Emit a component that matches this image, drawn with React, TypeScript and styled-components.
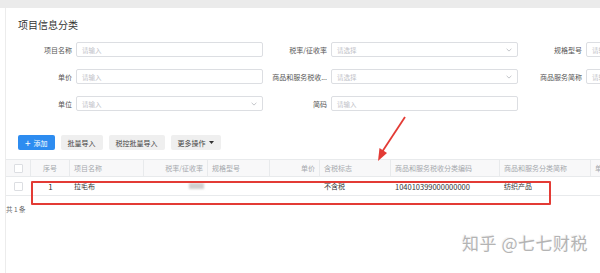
import React from 'react';
import styled, { createGlobalStyle } from 'styled-components';

const GlobalStyle = createGlobalStyle`
  html, body {
    margin: 0;
    padding: 0;
    background: #fff;
    font-family: 'Noto Sans CJK SC', 'Noto Sans', sans-serif;
  }
`;

const Page = styled.div`
  position: relative;
  width: 600px;
  height: 273px;
  overflow: hidden;
  background: #fff;
`;

const TopStrip = styled.div`
  height: 8px;
  background: #ebebeb;
`;

const Main = styled.div`
  margin-left: 5px;
  border-left: 1px solid #ececec;
  height: 265px;
  display: flex;
  flex-direction: column;
`;

const Title = styled.h2`
  margin: 10px 0 0 12px;
  font-size: 10px;
  line-height: 14px;
  font-weight: 400;
  color: #333;
`;

const Form = styled.div`
  margin: 10px 0 0 4px;
  display: flex;
  flex-direction: column;
  gap: 12px;
`;

const FormRow = styled.div`
  display: flex;
  gap: 2px;
  height: 15px;
`;

const Field = styled.div`
  display: flex;
  align-items: center;
  gap: 4px;
  width: 253px;
  flex-shrink: 0;
`;

const Label = styled.span`
  width: 62px;
  flex-shrink: 0;
  text-align: right;
  font-size: 7px;
  color: #555;
  white-space: nowrap;
`;

const InputBox = styled.div`
  width: 187px;
  height: 15px;
  box-sizing: border-box;
  border: 1px solid #dcdee2;
  border-radius: 2px;
  display: flex;
  align-items: center;
  justify-content: space-between;
  padding: 0 5px;
  font-size: 6.5px;
  color: #bfc2c8;
`;

const Chevron = () => (
  <svg width="6" height="4" viewBox="0 0 6 4">
    <path d="M0.6 0.8 L3 3.1 L5.4 0.8" fill="none" stroke="#b5b8be" strokeWidth="0.8" />
  </svg>
);

const Toolbar = styled.div`
  margin: 24px 0 0 12px;
  display: flex;
  gap: 6px;
`;

const Button = styled.button<{ $primary?: boolean }>`
  height: 15px;
  padding: 0 7px;
  border: none;
  border-radius: 2px;
  display: flex;
  align-items: center;
  gap: 3px;
  font-family: inherit;
  font-size: 7px;
  background: ${(p) => (p.$primary ? '#2d8cf0' : '#efefef')};
  color: ${(p) => (p.$primary ? '#fff' : '#444')};
`;

const Table = styled.div`
  margin-top: 9px;
  display: flex;
  flex-direction: column;
`;

const Row = styled.div<{ $head?: boolean }>`
  display: flex;
  height: ${(p) => (p.$head ? '18px' : '19px')};
  background: ${(p) => (p.$head ? '#f8f8f9' : '#fff')};
  border-top: ${(p) => (p.$head ? '1px solid #e8eaec' : 'none')};
  border-bottom: 1px solid #e8eaec;
  box-sizing: border-box;
`;

const Cell = styled.div<{ $w: number; $align?: string; $head?: boolean; $line?: boolean }>`
  width: ${(p) => p.$w}px;
  flex-shrink: 0;
  box-sizing: border-box;
  padding: 0 4px;
  display: flex;
  align-items: center;
  justify-content: ${(p) => p.$align || 'flex-start'};
  font-size: 7px;
  color: ${(p) => (p.$head ? '#a5a8ad' : '#333')};
  border-right: ${(p) => (p.$line ? '1px solid #e8eaec' : 'none')};
  white-space: nowrap;
  overflow: hidden;
`;

const Check = styled.span`
  width: 7px;
  height: 7px;
  border: 1px solid #dcdee2;
  border-radius: 1px;
  background: #fff;
`;

const Blur = styled.span`
  width: 15px;
  height: 6px;
  background: #cfcfcf;
  filter: blur(1px);
`;

const Total = styled.div`
  margin: 8px 0 0 0;
  font-size: 6.5px;
  color: #666;
`;

const Highlight = styled.div`
  position: absolute;
  left: 31px;
  top: 181px;
  width: 520px;
  height: 24px;
  box-sizing: border-box;
  border: 2px solid #e33b35;
  border-radius: 1px;
  pointer-events: none;
`;

const Arrow = styled.svg`
  position: absolute;
  left: 370px;
  top: 112px;
`;

const Watermark = styled.div`
  position: absolute;
  right: 12px;
  top: 231px;
  font-size: 17px;
  line-height: 24px;
  color: #b4b4b4;
  text-shadow: 1px 1px 0 #fff, -1px -1px 0 #f4f4f4;
  letter-spacing: 0.5px;
`;

type FieldDef = { label: string; select?: boolean; hint?: string } | null;

const rows: FieldDef[][] = [
  [{ label: '项目名称' }, { label: '税率/征收率', select: true }, { label: '规格型号' }],
  [{ label: '单价' }, { label: '商品和服务税收...', select: true }, { label: '商品服务简称' }],
  [{ label: '单位', select: true, hint: '请输入' }, { label: '简码' }, null],
];

const columns = [
  { title: '', w: 25, align: 'center' },
  { title: '序号', w: 39, align: 'center' },
  { title: '项目名称', w: 74 },
  { title: '税率/征收率', w: 64, align: 'flex-end' },
  { title: '规格型号', w: 62 },
  { title: '单价', w: 50, align: 'flex-end' },
  { title: '含税标志', w: 71 },
  { title: '商品和服务税收分类编码', w: 109 },
  { title: '商品和服务分类简称', w: 91 },
  { title: '单位', w: 60 },
];

export default function App() {
  const data: React.ReactNode[] = [
    <Check key="c" />,
    <span key="n" style={{ fontSize: 8 }}>1</span>,
    '拉毛布',
    <Blur key="b" />,
    '',
    '',
    '不含税',
    <span key="code" style={{ fontSize: 7.5 }}>104010399000000000</span>,
    '纺织产品',
    '',
  ];

  return (
    <Page>
      <GlobalStyle />
      <TopStrip />
      <Main>
        <Title>项目信息分类</Title>
        <Form>
          {rows.map((row, ri) => (
            <FormRow key={ri}>
              {row.map((f, fi) =>
                f ? (
                  <Field key={fi}>
                    <Label>{f.label}</Label>
                    <InputBox>
                      <span>{f.hint || (f.select ? '请选择' : '请输入')}</span>
                      {f.select && <Chevron />}
                    </InputBox>
                  </Field>
                ) : null,
              )}
            </FormRow>
          ))}
        </Form>
        <Toolbar>
          <Button $primary>
            <span style={{ fontSize: 10, lineHeight: 1 }}>+</span>
            添加
          </Button>
          <Button>批量导入</Button>
          <Button>税控批量导入</Button>
          <Button>
            更多操作
            <svg width="5" height="3" viewBox="0 0 5 3">
              <path d="M0 0 L5 0 L2.5 3 Z" fill="#333" />
            </svg>
          </Button>
        </Toolbar>
        <Table>
          <Row $head>
            {columns.map((c, i) => (
              <Cell key={i} $w={c.w} $align={c.align} $head $line>
                {i === 0 ? <Check /> : c.title}
              </Cell>
            ))}
          </Row>
          <Row>
            {columns.map((c, i) => (
              <Cell key={i} $w={c.w} $align={c.align}>
                {data[i]}
              </Cell>
            ))}
          </Row>
        </Table>
        <Total>共 1 条</Total>
      </Main>
      <Highlight />
      <Arrow width="40" height="52" viewBox="0 0 40 52">
        <line x1="35" y1="5" x2="12" y2="40" stroke="#e33b35" strokeWidth="1.8" />
        <path d="M8 49 L9.5 36 L17 41 Z" fill="#e33b35" />
      </Arrow>
      <Watermark>知乎 @七七财税</Watermark>
    </Page>
  );
}
